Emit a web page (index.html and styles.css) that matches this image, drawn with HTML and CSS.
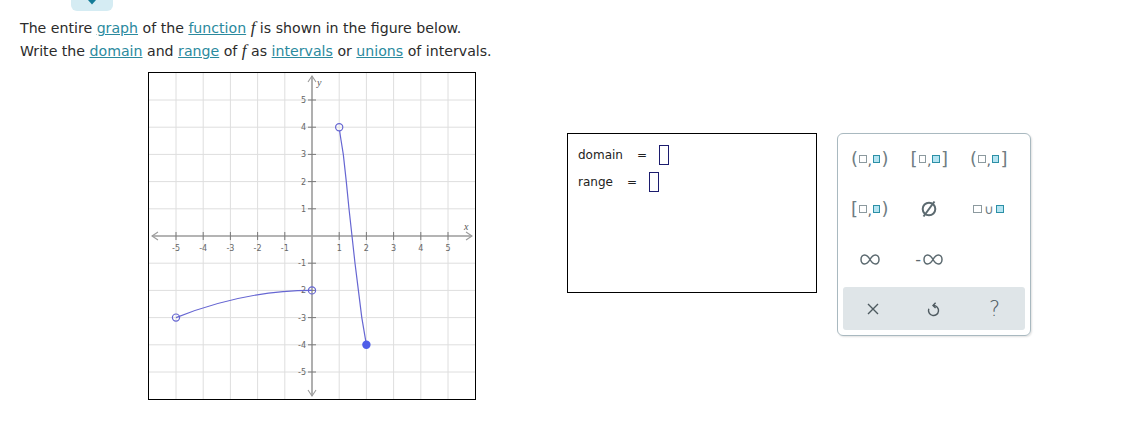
FILE: index.html
```html
<!DOCTYPE html>
<html>
<head>
<meta charset="utf-8">
<link rel="stylesheet" href="styles.css">
</head>
<body>
<div class="topbtn">
  <svg width="10" height="5" viewBox="0 0 10 5"><path d="M1 0 L5 4.5 L9 0 Z" fill="#137b97"/></svg>
</div>
<div class="prompt">
  <p>The entire <a class="lnk">graph</a> of the <a class="lnk">function</a> <i class="fn">f</i> is shown in the figure below.</p>
  <p>Write the <a class="lnk">domain</a> and <a class="lnk">range</a> of <i class="fn">f</i> as <a class="lnk">intervals</a> or <a class="lnk">unions</a> of intervals.</p>
</div>
<div class="main">
  <div class="graph">
    <svg width="326" height="326" viewBox="0 0 326 326">
      <g stroke="#dedede" stroke-width="1" fill="none">
        <path d="M27 0V326M54.2 0V326M81.4 0V326M108.6 0V326M135.8 0V326M190.2 0V326M217.4 0V326M244.6 0V326M271.8 0V326M299 0V326"/>
        <path d="M0 27H326M0 54.2H326M0 81.4H326M0 108.6H326M0 135.8H326M0 190.2H326M0 217.4H326M0 244.6H326M0 271.8H326M0 299H326"/>
      </g>
      <g stroke="#9c9c9c" stroke-width="1.6" fill="none">
        <path d="M3 163H323M163 3V323"/>
        <path d="M9 159L3 163L9 167M317 159L323 163L317 167M159 9L163 3L167 9M159 317L163 323L167 317" stroke-width="1.1"/>
      </g>
      <g stroke="#7a7a7a" stroke-width="1" fill="none">
        <path d="M27 159V167M54.2 159V167M81.4 159V167M108.6 159V167M135.8 159V167M190.2 159V167M217.4 159V167M244.6 159V167M271.8 159V167M299 159V167"/>
        <path d="M159 27H167M159 54.2H167M159 81.4H167M159 108.6H167M159 135.8H167M159 190.2H167M159 217.4H167M159 244.6H167M159 271.8H167M159 299H167"/>
      </g>
      <g class="lbl" text-anchor="middle">
        <text x="27" y="178">-5</text>
        <text x="54.2" y="178">-4</text>
        <text x="81.4" y="178">-3</text>
        <text x="108.6" y="178">-2</text>
        <text x="135.8" y="178">-1</text>
        <text x="190.2" y="178">1</text>
        <text x="217.4" y="178">2</text>
        <text x="244.6" y="178">3</text>
        <text x="271.8" y="178">4</text>
        <text x="299" y="178">5</text>
      </g>
      <g class="lbl" text-anchor="end">
        <text x="157" y="30">5</text>
        <text x="157" y="57.2">4</text>
        <text x="157" y="84.4">3</text>
        <text x="157" y="111.6">2</text>
        <text x="157" y="138.8">1</text>
        <text x="157" y="193.2">-1</text>
        <text x="157" y="220.4">-2</text>
        <text x="157" y="247.6">-3</text>
        <text x="157" y="274.8">-4</text>
        <text x="157" y="302">-5</text>
      </g>
      <text class="axl" x="168" y="13">y</text>
      <text class="axl" x="315" y="157">x</text>
      <g stroke="#6666d2" stroke-width="1.2" fill="none">
        <path d="M27 244.6 Q95 217.4 163 217.4"/>
        <polyline points="190.6,57.8 192,67 194.3,81.4 197.3,108.6 200,135.8 203,163 206,190.2 209.4,217.4 212.8,244.6 217.4,271.8"/>
        <circle cx="27" cy="244.6" r="3.6"/>
        <circle cx="163" cy="217.4" r="3.6"/>
        <circle cx="190.2" cy="54.2" r="3.6"/>
      </g>
      <circle cx="217.4" cy="271.8" r="4.2" fill="#4f5ee8"/>
    </svg>
  </div>

  <div class="answer">
    <div class="row"><span>domain</span><span class="eq">=</span><span class="slot"></span></div>
    <div class="row"><span>range</span><span class="eq">=</span><span class="slot"></span></div>
  </div>

  <div class="keypad">
    <div class="keys">
      <div class="key"><span class="iv"><span class="p">(</span><span class="b1"></span><span class="cm">,</span><span class="b2"></span><span class="p">)</span></span></div>
      <div class="key"><span class="iv"><span class="p">[</span><span class="b1"></span><span class="cm">,</span><span class="b2"></span><span class="p">]</span></span></div>
      <div class="key"><span class="iv"><span class="p">(</span><span class="b1"></span><span class="cm">,</span><span class="b2"></span><span class="p">]</span></span></div>
      <div class="key"><span class="iv"><span class="p">[</span><span class="b1"></span><span class="cm">,</span><span class="b2"></span><span class="p">)</span></span></div>
      <div class="key">
        <svg width="20" height="18" viewBox="0 0 20 18"><circle cx="10" cy="9" r="6.3" fill="none" stroke="#5c6a70" stroke-width="2"/><path d="M4.5 16.5L15.5 1.5" stroke="#5c6a70" stroke-width="2"/></svg>
      </div>
      <div class="key"><span class="iv"><span class="b1 big"></span><span class="cup">∪</span><span class="b2 big"></span></span></div>
      <div class="key">
        <svg class="inf" width="20" height="11" viewBox="0 0 20 11"><path d="M10 5.5C8 2 6.5 1 4.6 1C2.5 1 1 3 1 5.5C1 8 2.5 10 4.6 10C6.5 10 8 9 10 5.5C12 2 13.5 1 15.4 1C17.5 1 19 3 19 5.5C19 8 17.5 10 15.4 10C13.5 10 12 9 10 5.5Z" fill="none" stroke="#5c6a70" stroke-width="1.5"/></svg>
      </div>
      <div class="key">
        <span class="minus">-</span>
        <svg class="inf" width="20" height="11" viewBox="0 0 20 11"><path d="M10 5.5C8 2 6.5 1 4.6 1C2.5 1 1 3 1 5.5C1 8 2.5 10 4.6 10C6.5 10 8 9 10 5.5C12 2 13.5 1 15.4 1C17.5 1 19 3 19 5.5C19 8 17.5 10 15.4 10C13.5 10 12 9 10 5.5Z" fill="none" stroke="#5c6a70" stroke-width="1.5"/></svg>
      </div>
      <div class="key"></div>
    </div>
    <div class="bar">
      <span class="bk">
        <svg width="12" height="12" viewBox="0 0 12 12"><path d="M1 1L11 11M11 1L1 11" stroke="#4e5a60" stroke-width="1.4"/></svg>
      </span>
      <span class="bk">
        <svg width="13" height="16" viewBox="0 0 13 16"><path d="M6.5 4.5A5 5 0 1 1 1.8 7.8" fill="none" stroke="#4e5a60" stroke-width="1.4"/><path d="M8.6 1.8L6 4.5L8.6 7" fill="none" stroke="#4e5a60" stroke-width="1.4"/></svg>
      </span>
      <span class="bk q">?</span>
    </div>
  </div>
</div>
</body>
</html>
```

FILE: styles.css
```css
body {
  margin: 0;
  font-family: "DejaVu Sans", Verdana, sans-serif;
  color: #2b2b2b;
  background: #fff;
}

.topbtn {
  margin-left: 71px;
  width: 42px;
  height: 11px;
  background: #d5ecf3;
  border-radius: 0 0 6px 6px;
  display: flex;
  justify-content: center;
  align-items: flex-start;
}

.topbtn svg {
  display: block;
}

.prompt {
  margin: 5px 0 0 20px;
  font-size: 14.15px;
  line-height: 23px;
}

.prompt p {
  margin: 0;
  height: 23px;
}

.lnk {
  color: #2b8a9e;
  text-decoration: underline;
}

.fn {
  font-family: "Liberation Serif", serif;
  font-style: italic;
  font-size: 17px;
}

.main {
  display: flex;
  align-items: flex-start;
  margin-top: 10px;
}

.graph {
  margin-left: 148px;
  width: 326px;
  height: 326px;
  border: 1px solid #000;
  flex: none;
}

.graph svg {
  display: block;
}

.lbl {
  font-family: "DejaVu Sans", sans-serif;
  font-size: 8px;
  fill: #666;
}

.axl {
  font-family: "Liberation Serif", serif;
  font-style: italic;
  font-size: 10px;
  fill: #555;
}

.answer {
  margin: 61px 0 0 91px;
  width: 250px;
  height: 160px;
  box-sizing: border-box;
  border: 1px solid #000;
  padding: 7px 10px;
  font-size: 12px;
  color: #222;
  flex: none;
}

.row {
  display: flex;
  align-items: center;
  height: 27px;
}

.eq {
  margin: 0 12px 0 14px;
}

.slot {
  display: inline-block;
  width: 8px;
  height: 18px;
  border: 1.5px solid #1c1c6e;
}

.keypad {
  margin: 61px 0 0 20px;
  width: 194px;
  height: 203px;
  box-sizing: border-box;
  border: 1px solid #a9b9c0;
  border-radius: 6px;
  box-shadow: 1px 1px 2px rgba(0, 0, 0, 0.12);
  flex: none;
}

.keys {
  display: grid;
  grid-template-columns: repeat(3, 59.5px);
  grid-auto-rows: 50px;
  padding-left: 2px;
  height: 150px;
}

.key {
  display: flex;
  align-items: center;
  justify-content: center;
  color: #5d6c72;
}

.key svg {
  display: block;
}

.iv {
  font-size: 18px;
  line-height: 22px;
  white-space: nowrap;
}

.p {
  font-weight: normal;
  color: #6f7d83;
}

.b1,
.b2 {
  display: inline-block;
  width: 5.5px;
  height: 5.5px;
  border: 1.5px solid #8c9a9f;
  background: #fff;
  vertical-align: 2px;
  margin: 0 1px;
}

.b2 {
  border-color: #2c90a6;
  background: #b5e4f2;
}

.b1.big,
.b2.big {
  width: 6.5px;
  height: 6.5px;
  margin: 0;
  vertical-align: 1px;
}

.cm {
  font-size: 14px;
  color: #5f6e74;
}

.cup {
  font-size: 13px;
  color: #6b7a80;
  margin: 0 2px;
}

.minus {
  font-size: 16px;
  margin-right: 2px;
  color: #5c6a70;
}

.bar {
  margin: 3px 5px 0;
  height: 43px;
  background: #dfe5e8;
  border-radius: 3px;
  display: grid;
  grid-template-columns: repeat(3, 1fr);
  align-items: center;
  justify-items: center;
}

.bk {
  display: flex;
  align-items: center;
  justify-content: center;
}

.bk svg {
  display: block;
}

.q {
  font-size: 21px;
  font-weight: 200;
  color: #4f5c62;
  line-height: 20px;
}
```
